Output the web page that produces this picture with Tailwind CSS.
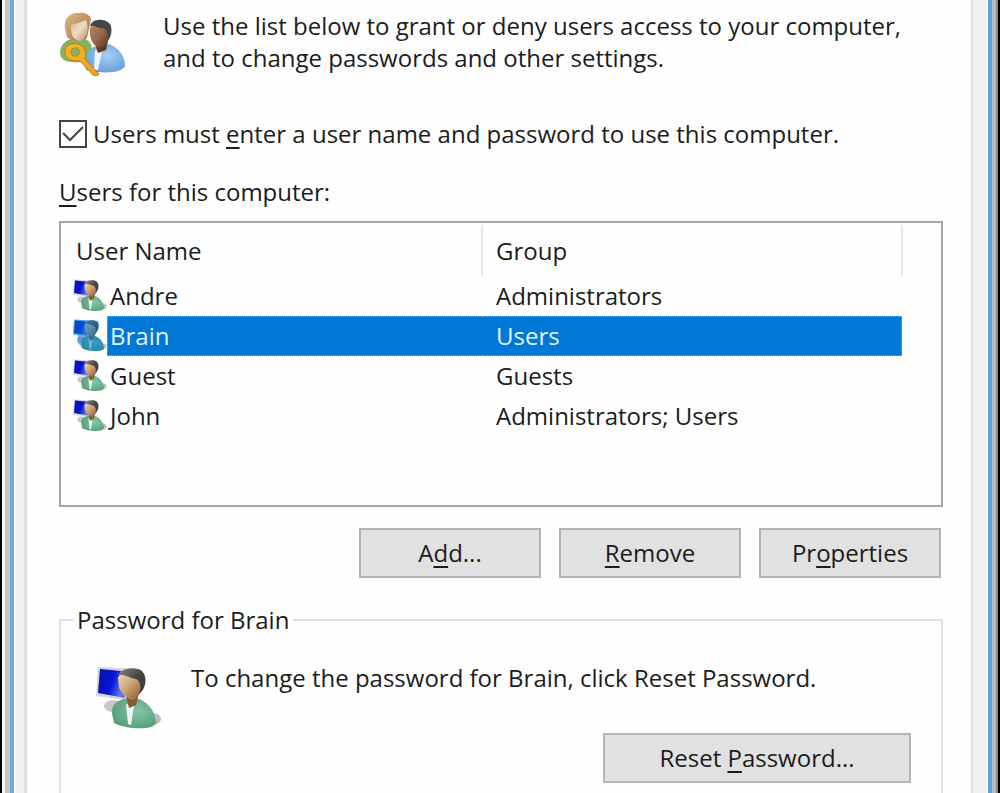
<!DOCTYPE html>
<html lang="en">
<head>
    <meta charset="UTF-8">
    <meta name="viewport" content="width=device-width, initial-scale=1.0">
    <title>User Accounts</title>
    <script src="https://cdn.jsdelivr.net/npm/@tailwindcss/browser@4"></script>
</head>
<body class="bg-black min-h-screen flex text-[#1c1c1c] text-2xl leading-8 font-['Open_Sans','Noto_Sans',sans-serif]">
    <!-- shared icons -->
    <svg class="absolute w-0 h-0" aria-hidden="true">
        <defs>
            <linearGradient id="screen" x1="0" y1="0" x2="1" y2="0.4">
                <stop offset="0" stop-color="#0a12a0"/>
                <stop offset="0.6" stop-color="#0414d8"/>
                <stop offset="1" stop-color="#5a76e8"/>
            </linearGradient>
            <linearGradient id="skin" x1="0" y1="0" x2="1" y2="1">
                <stop offset="0" stop-color="#f3dcc0"/>
                <stop offset="0.5" stop-color="#c99e72"/>
                <stop offset="1" stop-color="#7d5128"/>
            </linearGradient>
            <linearGradient id="fairskin" x1="0" y1="0" x2="1" y2="1">
                <stop offset="0" stop-color="#d9b48c"/>
                <stop offset="0.5" stop-color="#efdac6"/>
                <stop offset="1" stop-color="#b98a60"/>
            </linearGradient>
            <linearGradient id="darkskin" x1="0" y1="0" x2="1" y2="1">
                <stop offset="0" stop-color="#b58a68"/>
                <stop offset="0.5" stop-color="#96674a"/>
                <stop offset="1" stop-color="#55301c"/>
            </linearGradient>
            <linearGradient id="hair" x1="0" y1="0" x2="1" y2="1">
                <stop offset="0" stop-color="#8a8682"/>
                <stop offset="0.5" stop-color="#4a4644"/>
                <stop offset="1" stop-color="#3a3532"/>
            </linearGradient>
            <linearGradient id="blonde" x1="0" y1="0" x2="1" y2="1">
                <stop offset="0" stop-color="#dcb98a"/>
                <stop offset="1" stop-color="#a5713c"/>
            </linearGradient>
            <radialGradient id="green" cx="0.6" cy="0.4" r="0.7">
                <stop offset="0" stop-color="#84c4a2"/>
                <stop offset="1" stop-color="#529c78"/>
            </radialGradient>
            <radialGradient id="blue" cx="0.55" cy="0.4" r="0.7">
                <stop offset="0" stop-color="#a4cdf2"/>
                <stop offset="1" stop-color="#5f9cd6"/>
            </radialGradient>
            <linearGradient id="gold" x1="0" y1="0" x2="1" y2="1">
                <stop offset="0" stop-color="#f7b52c"/>
                <stop offset="1" stop-color="#f0a020"/>
            </linearGradient>
        </defs>
        <symbol id="user" viewBox="0 0 66 66">
            <ellipse cx="17" cy="40" rx="9" ry="6" fill="#c9c9c9"/>
            <ellipse cx="57" cy="53" rx="8" ry="6" fill="#bdbdbd"/>
            <path d="M2 1 L44 3 L42 33 L30 34 L0 30 Z" fill="#d3d5dc"/>
            <path d="M4 3 L25 5 L29 32 L2 27 Z" fill="url(#screen)"/>
            <path d="M17 52 C14 42 18 35 28 33 L43 33 C54 37 60 48 60 57 C56 66 26 62 18 57 Z" fill="url(#green)"/>
            <path d="M30 38 L38 40 L35 59 L32 58 Z" fill="#eef7f3"/>
            <path d="M29 26 L43 27 L40 39 L33 42 Z" fill="#8a5830"/>
            <path d="M22 12 C24 4 40 4 46 10 C50 18 45 29 38 34 C32 34 26 28 23 22 Z" fill="url(#skin)"/>
            <path d="M22 9 C25 2 40 0 46 5 C52 11 50 23 43 28 C46 21 44 15 40 13 C34 12 28 8 22 9 Z" fill="url(#hair)"/>
        </symbol>
        <symbol id="users" viewBox="0 0 66 66">
            <path d="M1 42 C2 33 9 28 19 28 C29 28 34 32 33 44 C31 51 22 53 13 52 C5 52 1 48 1 42 Z" fill="#82b562"/>
            <path d="M7 22 C3 10 10 2 20 3 C26 2 31 5 32 9 L28 28 C24 33 11 31 8 27 Z" fill="url(#blonde)"/>
            <path d="M12 15 C17 14 22 12 27 10 C30 16 29 28 22 31 C15 31 11 24 12 15 Z" fill="url(#fairskin)"/>
            <path d="M27 60 C25 48 28 38 38 36 L50 34 C60 38 66 46 66 56 C62 64 43 63 31 61 Z" fill="url(#blue)"/>
            <path d="M36 40 L43 42 L39 60 L35 60 Z" fill="#eef5fb"/>
            <path d="M35 30 L49 31 L47 40 L39 43 Z" fill="#633b22"/>
            <path d="M31 18 C34 11 47 11 51 19 C52 29 47 37 41 38 C34 36 30 29 31 18 Z" fill="url(#darkskin)"/>
            <path d="M31 16 C33 8 46 8 51 14 C54 19 52 28 49 30 C49 23 47 19 44 18 C40 19 35 15 31 16 Z" fill="#474747"/>
            <path d="M8 36 C13 32 21 33 25 38 C28 43 26 47 26 49 L40 64 L38 66 L34 65 L21 51 C14 51 9 50 7 46 C5 42 6 38 8 36 Z M12 42 C12 46 17 48 20 44 C21 40 20 38 17 38 C14 38 12 39 12 42 Z" fill="url(#gold)" fill-rule="evenodd" stroke="#c47a14"/>
        </symbol>
    </svg>

    <!-- window frame, left -->
    <div class="flex shrink-0 pl-[2px]">
        <div class="w-[3px] bg-[#f4f4f4]"></div>
        <div class="w-[5px] bg-[#c6c4c4]"></div>
        <div class="w-[4px] bg-[#6aade2]"></div>
        <div class="w-[2px] bg-[#fdf8f4]"></div>
        <div class="w-[8px] bg-[#f0f0f0]"></div>
        <div class="w-[3px] bg-[#e0e0e0]"></div>
    </div>

    <main class="flex-1 min-w-0 flex flex-col bg-[#fefefe] pl-8 pr-7">
        <header class="flex gap-[38px] pt-[10px]">
            <svg class="w-[66px] h-[66px] shrink-0"><use href="#users"/></svg>
            <p>Use the list below to grant or deny users access to your computer,<br>and to change passwords and other settings.</p>
        </header>

        <label class="flex items-center gap-[6px] mt-[42px]">
            <span class="relative w-7 h-7">
                <input type="checkbox" checked class="peer block appearance-none w-7 h-7 border-2 border-[#444] bg-white">
                <svg class="absolute inset-0 w-7 h-7 pointer-events-none invisible peer-checked:visible" viewBox="0 0 28 28" fill="none" stroke="#444" stroke-width="2"><path d="M4 13 L11 20 L24 7"/></svg>
            </span>
            <span>Users must <span class="underline decoration-2 underline-offset-4">e</span>nter a user name and password to use this computer.</span>
        </label>

        <h2 id="users-label" class="mt-[26px]"><span class="underline decoration-2 underline-offset-4">U</span>sers for this computer:</h2>

        <div class="mt-[13px] h-[286px] border-2 border-[#a0a4ac] bg-[#fefefe] pt-[2px]">
            <table aria-labelledby="users-label" class="w-full table-fixed border-collapse text-left">
                <colgroup>
                    <col class="w-[421px]">
                    <col class="w-[420px]">
                    <col>
                </colgroup>
                <thead>
                    <tr class="h-[51px]">
                        <th class="font-normal p-0 pl-[15px] border-r-2 border-[#e8e8e8]">User Name</th>
                        <th class="font-normal p-0 pl-[13px] border-r-2 border-[#e8e8e8]">Group</th>
                        <td></td>
                    </tr>
                </thead>
                <tbody>
                    <tr class="h-10">
                        <td class="p-0">
                            <div class="flex items-center h-10 pl-3">
                                <svg class="w-[34px] h-[34px] shrink-0"><use href="#user"/></svg>
                                <span class="pl-[3px]">Andre</span>
                            </div>
                        </td>
                        <td class="p-0 pl-[14px]">Administrators</td>
                        <td></td>
                    </tr>
                    <tr class="h-10 text-[#e6f3ff]">
                        <td class="p-0">
                            <div class="flex items-center h-10 pl-3">
                                <span class="relative w-[34px] h-[34px] shrink-0">
                                    <svg class="w-[34px] h-[34px]"><use href="#user"/></svg>
                                    <svg class="absolute inset-0 w-[34px] h-[34px]" viewBox="0 0 66 66" fill="#0078d7" fill-opacity="0.55"><path d="M2 1 L49 4 C52 12 50 21 44 27 L43 33 C54 37 60 48 60 57 C56 66 26 62 18 57 L8 44 L10 32 L0 30 Z"/></svg>
                                </span>
                                <span class="flex flex-1 items-center h-10 pl-[2px] bg-[#0078d7] border border-r-0 border-dotted border-[#d99a58]">Brain</span>
                            </div>
                        </td>
                        <td class="p-0"><div class="flex items-center h-10 pl-[14px] bg-[#0078d7] border border-l-0 border-dotted border-[#d99a58]">Users</div></td>
                        <td></td>
                    </tr>
                    <tr class="h-10">
                        <td class="p-0">
                            <div class="flex items-center h-10 pl-3">
                                <svg class="w-[34px] h-[34px] shrink-0"><use href="#user"/></svg>
                                <span class="pl-[3px]">Guest</span>
                            </div>
                        </td>
                        <td class="p-0 pl-[14px]">Guests</td>
                        <td></td>
                    </tr>
                    <tr class="h-10">
                        <td class="p-0">
                            <div class="flex items-center h-10 pl-3">
                                <svg class="w-[34px] h-[34px] shrink-0"><use href="#user"/></svg>
                                <span class="pl-[3px]">John</span>
                            </div>
                        </td>
                        <td class="p-0 pl-[14px]">Administrators; Users</td>
                        <td></td>
                    </tr>
                </tbody>
            </table>
        </div>

        <div class="flex justify-end gap-[18px] mt-[21px] pr-[2px]">
            <button type="button" class="w-[182px] h-[50px] bg-[#e1e1e1] border-2 border-[#b4b4b4]">A<span class="underline decoration-2 underline-offset-4">d</span>d...</button>
            <button type="button" class="w-[182px] h-[50px] bg-[#e1e1e1] border-2 border-[#b4b4b4]"><span class="underline decoration-2 underline-offset-4">R</span>emove</button>
            <button type="button" class="w-[182px] h-[50px] bg-[#e1e1e1] border-2 border-[#b4b4b4]">Pr<span class="underline decoration-2 underline-offset-4">o</span>perties</button>
        </div>

        <fieldset class="flex-1 mt-[26px] border-2 border-b-0 border-[#e2e2e2]">
            <legend class="ml-3 px-1">Password for Brain</legend>
            <div class="flex gap-[29px] pl-[35px] pt-[26px]">
                <svg class="mt-1 w-[66px] h-[66px] shrink-0"><use href="#user"/></svg>
                <p>To change the password for Brain, click Reset Password.</p>
            </div>
            <div class="flex justify-end pt-px pr-[30px]">
                <button type="button" class="w-[308px] h-[50px] bg-[#e1e1e1] border-2 border-[#b4b4b4]">Reset <span class="underline decoration-2 underline-offset-4">P</span>assword...</button>
            </div>
        </fieldset>
    </main>

    <!-- window frame, right -->
    <div class="flex shrink-0 pr-[2px]">
        <div class="w-[2px] bg-[#e0e0e0]"></div>
        <div class="w-[13px] bg-[#f0f0f0]"></div>
        <div class="w-[2px] bg-[#fdf8f4]"></div>
        <div class="w-[4px] bg-[#5aa4e0]"></div>
        <div class="w-[4px] bg-[#bcbaba]"></div>
        <div class="w-[2px] bg-[#8a8888]"></div>
    </div>
</body>
</html>
